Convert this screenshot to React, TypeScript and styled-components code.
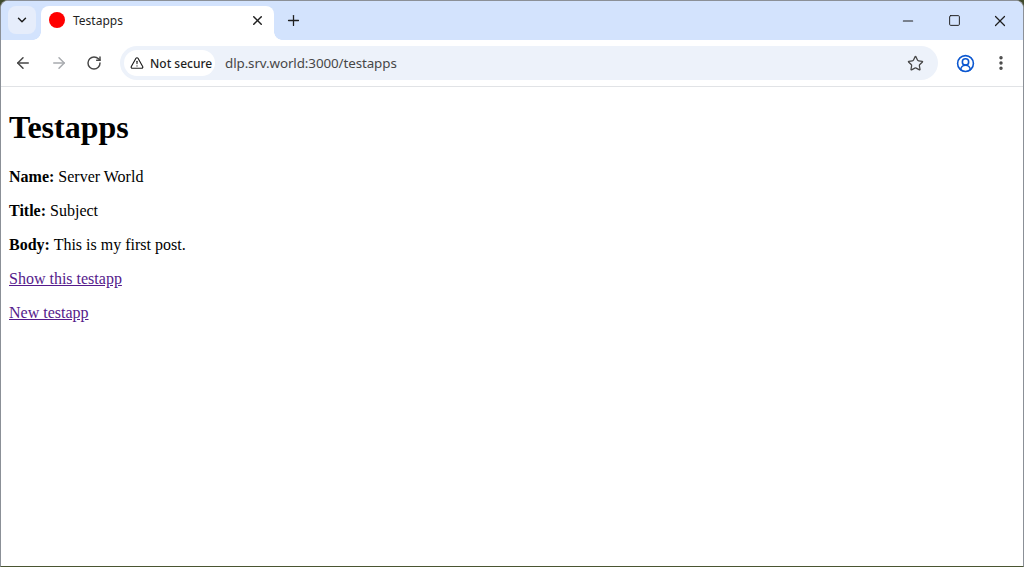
import React from "react";
import styled, { createGlobalStyle } from "styled-components";
import {
  ArrowLeft,
  ArrowRight,
  RotateCw,
  Star,
  CircleUserRound,
  EllipsisVertical,
  Minus,
  Square,
  X,
  Plus,
  ChevronDown,
  TriangleAlert,
} from "lucide-react";

const GlobalStyle = createGlobalStyle`
  html, body {
    margin: 0;
    padding: 0;
    background: #3f4a2c;
  }
  #root {
    width: 1024px;
    height: 567px;
  }
`;

const uiFont = `"Noto Sans", "Liberation Sans", sans-serif`;

const Window = styled.div`
  box-sizing: border-box;
  width: 1024px;
  height: 567px;
  display: flex;
  flex-direction: column;
  background: #ffffff;
  border: 1px solid #8b9097;
  border-bottom-color: #4a5532;
  border-radius: 8px 8px 0 0;
  overflow: hidden;
`;

const TabStrip = styled.div`
  height: 39px;
  flex: none;
  display: flex;
  align-items: stretch;
  background: #d3e3fd;
  padding-left: 7px;
`;

const TabSearch = styled.button`
  align-self: flex-start;
  margin-top: 5px;
  width: 28px;
  height: 28px;
  border: 0;
  border-radius: 8px;
  background: #e6edfb;
  color: #1f1f1f;
  display: flex;
  align-items: center;
  justify-content: center;
  padding: 0;
`;

const Tab = styled.div`
  position: relative;
  align-self: flex-end;
  margin-left: 5px;
  width: 233px;
  height: 34px;
  background: #ffffff;
  border-radius: 8px 8px 0 0;
  display: flex;
  align-items: center;
  padding: 0 8px 6px;
  box-sizing: border-box;
  gap: 8px;

  &::before,
  &::after {
    content: "";
    position: absolute;
    bottom: 0;
    width: 8px;
    height: 8px;
    background: radial-gradient(circle at var(--cx) 0, transparent 7.5px, #ffffff 8px);
  }
  &::before {
    left: -8px;
    --cx: 0;
  }
  &::after {
    right: -8px;
    --cx: 8px;
  }
`;

const Favicon = styled.span`
  width: 16px;
  height: 16px;
  border-radius: 50%;
  background: #ff0000;
  flex: none;
`;

const TabTitle = styled.span`
  flex: 1;
  font-family: ${uiFont};
  font-size: 12px;
  color: #1f1f1f;
`;

const TabClose = styled.span`
  display: flex;
  color: #1f1f1f;
  margin-right: 1px;
`;

const NewTab = styled.span`
  align-self: center;
  margin-left: 5px;
  width: 28px;
  height: 28px;
  display: flex;
  align-items: center;
  justify-content: center;
  color: #1f1f1f;
`;

const Spacer = styled.div`
  flex: 1;
`;

const WinButton = styled.span`
  width: 46px;
  display: flex;
  align-items: center;
  justify-content: center;
  color: #1f1f1f;
`;

const Toolbar = styled.div`
  flex: none;
  display: flex;
  align-items: center;
  background: #ffffff;
  border-bottom: 1px solid #e1e3e6;
  padding: 0 5px;
  box-sizing: border-box;
  height: 47px;
`;

const NavButton = styled.span<{ $dim?: boolean }>`
  flex: none;
  width: 34px;
  height: 34px;
  margin-right: ${(p) => (p.$dim ? "1px" : "2px")};
  display: flex;
  align-items: center;
  justify-content: center;
  color: ${(p) => (p.$dim ? "#a8abaf" : "#474747")};
`;

const Omnibox = styled.div`
  flex: none;
  margin-left: 7px;
  width: 818px;
  height: 34px;
  border-radius: 17px;
  background: #edf2fa;
  display: flex;
  align-items: center;
  padding: 0 4px;
  box-sizing: border-box;
`;

const SecurityChip = styled.span`
  height: 26px;
  width: 91px;
  border-radius: 13px;
  background: #ffffff;
  display: flex;
  align-items: center;
  gap: 6px;
  padding-left: 6px;
  box-sizing: border-box;
  font-family: ${uiFont};
  font-size: 12px;
  font-weight: 500;
  color: #1f1f1f;
  white-space: nowrap;
`;

const Url = styled.span`
  flex: 1;
  margin-left: 10px;
  font-family: ${uiFont};
  font-size: 13.4px;
  color: #474747;
  letter-spacing: -0.1px;
`;

const StarButton = styled.span`
  display: flex;
  color: #474747;
  margin-right: 10px;
`;

const ProfileButton = styled.span`
  flex: none;
  margin-left: 10px;
  width: 34px;
  display: flex;
  justify-content: center;
  color: #0b57d0;
`;

const MenuButton = styled.span`
  flex: none;
  margin-left: 2px;
  width: 34px;
  display: flex;
  justify-content: center;
  color: #474747;
`;

const Page = styled.div`
  flex: 1;
  padding: 22px 8px 8px;
  font-family: "Liberation Serif", "Times New Roman", serif;
  font-size: 16px;
  color: #000000;
`;

const Heading = styled.h1`
  font-size: 32px;
  font-weight: bold;
  margin: 0 0 22px;
`;

const Field = styled.p`
  margin: 16px 0;
`;

const PageLink = styled.a`
  color: #551a8b;
  text-decoration: underline;
`;

const fields = [
  { label: "Name:", value: "Server World" },
  { label: "Title:", value: "Subject" },
  { label: "Body:", value: "This is my first post." },
];

const App = () => {
  return (
    <>
      <GlobalStyle />
      <Window>
        <TabStrip>
          <TabSearch>
            <ChevronDown size={14} strokeWidth={2.5} />
          </TabSearch>
          <Tab>
            <Favicon />
            <TabTitle>Testapps</TabTitle>
            <TabClose>
              <X size={15} strokeWidth={2.4} />
            </TabClose>
          </Tab>
          <NewTab>
            <Plus size={17} strokeWidth={1.8} />
          </NewTab>
          <Spacer />
          <WinButton>
            <Minus size={16} strokeWidth={1.6} />
          </WinButton>
          <WinButton>
            <Square size={13} strokeWidth={1.8} />
          </WinButton>
          <WinButton>
            <X size={18} strokeWidth={1.6} />
          </WinButton>
        </TabStrip>
        <Toolbar>
          <NavButton>
            <ArrowLeft size={18} strokeWidth={2} />
          </NavButton>
          <NavButton $dim>
            <ArrowRight size={18} strokeWidth={2} />
          </NavButton>
          <NavButton>
            <RotateCw size={16} strokeWidth={2.2} />
          </NavButton>
          <Omnibox>
            <SecurityChip>
              <TriangleAlert size={14} strokeWidth={2} />
              Not secure
            </SecurityChip>
            <Url>dlp.srv.world:3000/testapps</Url>
            <StarButton>
              <Star size={17} strokeWidth={1.8} />
            </StarButton>
          </Omnibox>
          <ProfileButton>
            <CircleUserRound size={19} strokeWidth={2} />
          </ProfileButton>
          <MenuButton>
            <EllipsisVertical size={18} strokeWidth={2.6} />
          </MenuButton>
        </Toolbar>
        <Page>
          <Heading>Testapps</Heading>
          {fields.map((f) => (
            <Field key={f.label}>
              <strong>{f.label}</strong> {f.value}
            </Field>
          ))}
          <Field>
            <PageLink href="#">Show this testapp</PageLink>
          </Field>
          <Field>
            <PageLink href="#">New testapp</PageLink>
          </Field>
        </Page>
      </Window>
    </>
  );
};

export default App;
